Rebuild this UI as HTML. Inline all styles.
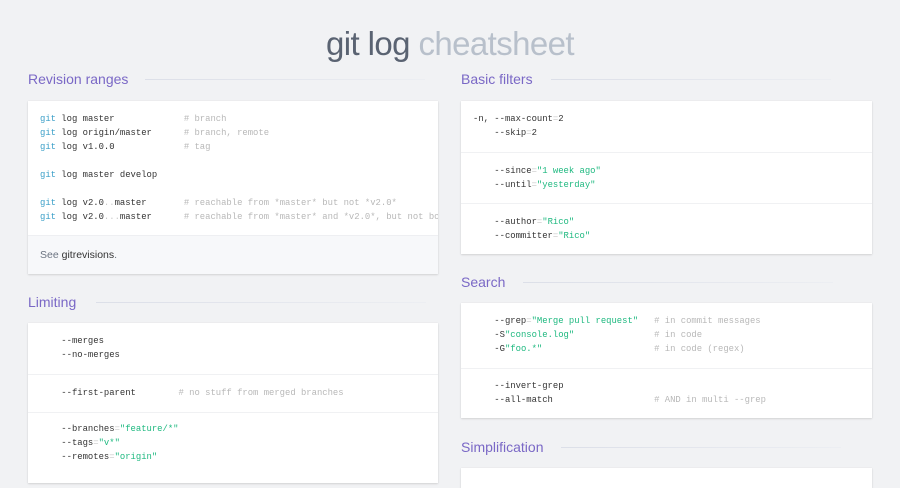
<!DOCTYPE html>
<html><head><meta charset="utf-8"><style>
body{margin:0;background:#f1f2f4;width:900px;height:471px;overflow:hidden;font-family:"Liberation Sans",sans-serif;position:relative}
h1{position:absolute;top:22px;left:0;width:900px;text-align:center;margin:0;font-weight:normal;font-size:33px;letter-spacing:-0.6px;color:#5a6372;line-height:44px}
h1 span{color:#b8c0cb}
.h{position:absolute;font-size:14px;color:#7a68c6;line-height:18px;white-space:nowrap}
.h i{position:absolute;top:9px;height:1px;background:linear-gradient(90deg,#dcdfe8,#eceef2)}
.card{position:absolute;background:#fff;box-shadow:0 1px 2px rgba(0,0,0,.12),0 0 1px rgba(0,0,0,.08);overflow:hidden}
pre{margin:0;font-family:"Liberation Mono",monospace;font-size:8.9px;line-height:14px;color:#333;white-space:pre;position:absolute;left:12px}
.sep{position:absolute;left:0;right:0;height:1px;background:#f0f1f3}
.k{color:#3b9fc8}.c{color:#b8b8b8}.s{color:#1fb980}.d{color:#c8c8c8}
.foot{position:absolute;left:0;right:0;bottom:0;height:38px;background:#f7f8fa;border-top:1px solid #eeeff2;font-size:10.5px;color:#6b7380;line-height:38px;padding-left:12px}
.foot b{font-weight:normal;color:#333}
</style></head><body>
<h1>git log <span>cheatsheet</span></h1>

<div class="h" style="left:28px;top:70px">Revision ranges<i style="left:117px;width:280px"></i></div>
<div class="card" style="left:28px;top:101px;width:410px;height:173px">
<pre style="top:11px"><span class="k">git</span> log master             <span class="c"># branch</span>
<span class="k">git</span> log origin/master      <span class="c"># branch, remote</span>
<span class="k">git</span> log v1.0.0             <span class="c"># tag</span>

<span class="k">git</span> log master develop

<span class="k">git</span> log v2.0<span class="d">..</span>master       <span class="c"># reachable from *master* but not *v2.0*</span>
<span class="k">git</span> log v2.0<span class="d">...</span>master      <span class="c"># reachable from *master* and *v2.0*, but not both</span></pre>
<div class="foot">See <b>gitrevisions</b>.</div>
</div>

<div class="h" style="left:28px;top:293px">Limiting<i style="left:68px;width:330px"></i></div>
<div class="card" style="left:28px;top:323px;width:410px;height:160px">
<pre style="top:11px">    --merges
    --no-merges</pre>
<div class="sep" style="top:51px"></div>
<pre style="top:63px">    --first-parent        <span class="c"># no stuff from merged branches</span></pre>
<div class="sep" style="top:89px"></div>
<pre style="top:99px">    --branches<span class="d">=</span><span class="s">"feature/*"</span>
    --tags<span class="d">=</span><span class="s">"v*"</span>
    --remotes<span class="d">=</span><span class="s">"origin"</span></pre>
</div>

<div class="h" style="left:461px;top:70px">Basic filters<i style="left:90px;width:280px"></i></div>
<div class="card" style="left:461px;top:101px;width:411px;height:153px">
<pre style="top:11px">-n, --max-count<span class="d">=</span>2
    --skip<span class="d">=</span>2</pre>
<div class="sep" style="top:51px"></div>
<pre style="top:63px">    --since<span class="d">=</span><span class="s">"1 week ago"</span>
    --until<span class="d">=</span><span class="s">"yesterday"</span></pre>
<div class="sep" style="top:102px"></div>
<pre style="top:114px">    --author<span class="d">=</span><span class="s">"Rico"</span>
    --committer<span class="d">=</span><span class="s">"Rico"</span></pre>
</div>

<div class="h" style="left:461px;top:273px">Search<i style="left:62px;width:310px"></i></div>
<div class="card" style="left:461px;top:303px;width:411px;height:115px">
<pre style="top:11px">    --grep<span class="d">=</span><span class="s">"Merge pull request"</span>   <span class="c"># in commit messages</span>
    -S<span class="s">"console.log"</span>               <span class="c"># in code</span>
    -G<span class="s">"foo.*"</span>                     <span class="c"># in code (regex)</span></pre>
<div class="sep" style="top:65px"></div>
<pre style="top:76px">    --invert-grep
    --all-match                   <span class="c"># AND in multi --grep</span></pre>
</div>

<div class="h" style="left:461px;top:438px">Simplification<i style="left:100px;width:280px"></i></div>
<div class="card" style="left:461px;top:468px;width:411px;height:20px"></div>
</body></html>
